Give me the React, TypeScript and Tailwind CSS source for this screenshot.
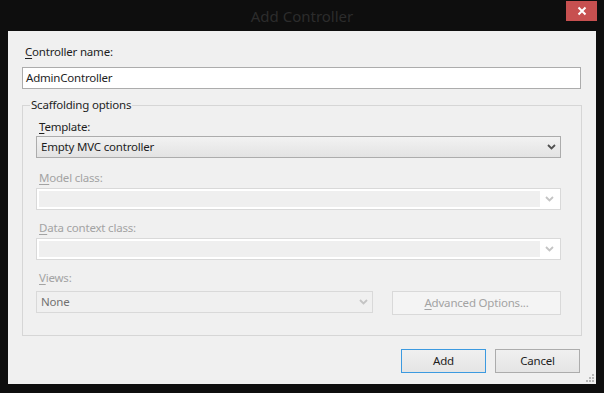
import React from "react";

const font = { fontFamily: '"Segoe UI", "Noto Sans", "Liberation Sans", sans-serif' };

const Chevron: React.FC<{ color: string }> = ({ color }) => (
    <svg width="9" height="6" viewBox="0 0 9 6">
        <path d="M1 1 L4.5 4.5 L8 1" fill="none" stroke={color} strokeWidth="1.8" />
    </svg>
);

// Etiqueta con tecla de acceso subrayada
const Label: React.FC<{ k: string; rest: string; disabled?: boolean; className?: string }> = ({
    k,
    rest,
    disabled,
    className = "",
}) => (
    <div className={`h-[16px] leading-[16px] ${disabled ? "text-[#a3a3a3]" : "text-[#1e1e1e]"} ${className}`}>
        <span className="underline underline-offset-[2px]">{k}</span>
        {rest}
    </div>
);

const DisabledCombo: React.FC<{ className?: string }> = ({ className = "" }) => (
    <div className={`h-[22px] border border-[#d9d9d9] bg-white p-[2px] flex ${className}`}>
        <div className="flex-1 bg-[#efefef]" />
        <div className="w-[18px] flex items-center justify-center">
            <Chevron color="#c4c4c4" />
        </div>
    </div>
);

const App: React.FC = () => {
    return (
        <div className="w-[604px] h-[393px] bg-[#0e0e0e] flex flex-col text-[11.5px] tracking-[-0.2px]" style={font}>
            {/* Barra de título */}
            <div className="relative h-[31px] flex items-center justify-center">
                <span className="text-[15px] tracking-normal text-[#2c2c2c] mt-[1px]">Add Controller</span>
                <button className="absolute top-[1px] right-[7px] w-[31px] h-[20px] bg-[#c75050] flex items-center justify-center">
                    <svg width="10" height="10" viewBox="0 0 10 10">
                        <path d="M1.5 1.5 L8.5 8.5 M8.5 1.5 L1.5 8.5" stroke="#fff" strokeWidth="2" />
                    </svg>
                </button>
            </div>

            {/* Área de cliente */}
            <div className="relative mx-[8px] h-[353px] bg-[#f0f0f0] flex flex-col px-[14px] pr-[15px]">
                <Label k="C" rest="ontroller name:" className="mt-[13px] ml-[3px]" />
                <div className="mt-[7px] h-[22px] border border-[#acacac] bg-white flex items-center px-[3px] text-[#1e1e1e]">
                    AdminController
                </div>

                <fieldset className="mt-[8px] w-[560px] border border-[#d6d6d6] px-[13px] pt-[6px] pb-[20px]">
                    <legend className="ml-[-6px] px-[1px] h-[16px] leading-[16px] text-[#1e1e1e]">Scaffolding options</legend>

                    <Label k="T" rest="emplate:" className="ml-[3px]" />
                    <div className="mt-[1px] w-[525px] h-[22px] border border-[#acacac] bg-gradient-to-b from-[#f2f2f2] to-[#e3e3e3] flex items-center pl-[4px] pr-[4px] text-[#1e1e1e]">
                        <span className="flex-1">Empty MVC controller</span>
                        <Chevron color="#505050" />
                    </div>

                    <Label k="M" rest="odel class:" disabled className="mt-[12px] ml-[3px]" />
                    <DisabledCombo className="mt-[2px] w-[525px]" />

                    <Label k="D" rest="ata context class:" disabled className="mt-[10px] ml-[3px]" />
                    <DisabledCombo className="mt-[2px] w-[525px]" />

                    <Label k="V" rest="iews:" disabled className="mt-[10px] ml-[3px]" />
                    <div className="mt-[5px] flex items-start gap-[19px]">
                        <div className="w-[337px] h-[22px] border border-[#d9d9d9] bg-[#f0f0f0] flex items-center pl-[4px] pr-[4px] text-[#707070]">
                            <span className="flex-1">None</span>
                            <Chevron color="#c4c4c4" />
                        </div>
                        <div className="w-[169px] h-[24px] border border-[#d9d9d9] bg-[#f4f4f4] flex items-center justify-center text-[#a3a3a3]">
                            <span>
                                <span className="underline underline-offset-[2px]">A</span>dvanced Options...
                            </span>
                        </div>
                    </div>
                </fieldset>

                {/* Botones */}
                <div className="mt-[13px] flex justify-end gap-[9px] pr-[1px]">
                    <button className="w-[85px] h-[24px] border border-[#3c9ae0] bg-gradient-to-b from-[#f0f0f0] to-[#e5e5e5] text-[#1e1e1e]">
                        Add
                    </button>
                    <button className="w-[85px] h-[24px] border border-[#acacac] bg-gradient-to-b from-[#f0f0f0] to-[#e5e5e5] text-[#1e1e1e]">
                        Cancel
                    </button>
                </div>

                {/* Agarradera de redimensión */}
                <svg className="absolute right-[2px] bottom-[2px]" width="8" height="8" viewBox="0 0 8 8">
                    <g fill="#b8b8b8">
                        <rect x="6" y="0" width="2" height="2" />
                        <rect x="3" y="3" width="2" height="2" />
                        <rect x="6" y="3" width="2" height="2" />
                        <rect x="0" y="6" width="2" height="2" />
                        <rect x="3" y="6" width="2" height="2" />
                        <rect x="6" y="6" width="2" height="2" />
                    </g>
                </svg>
            </div>
        </div>
    );
};

export default App;
